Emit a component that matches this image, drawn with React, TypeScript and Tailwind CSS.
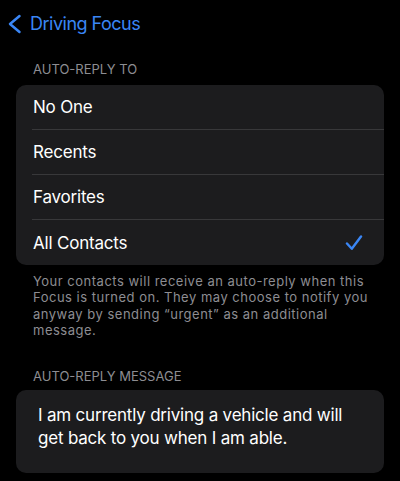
import React from 'react';

const options = ['No One', 'Recents', 'Favorites', 'All Contacts'];

const App = () => {
  const selected = 'All Contacts';

  return (
    <div className="min-h-screen w-[400px] h-[481px] overflow-hidden bg-black text-white font-['Inter',sans-serif]">
      {/* nav bar */}
      <div className="flex items-center h-[44px] pl-[8px] pt-[2px]">
        <svg width="14" height="20" viewBox="0 0 14 20" className="mr-[8px] mt-[1px]">
          <path d="M11.5 2 L2 10 L11.5 18" fill="none" stroke="#3a86f5" strokeWidth="2.5" strokeLinecap="round" strokeLinejoin="round" />
        </svg>
        <span className="text-[18px] text-[#3a86f5] tracking-[-0.5px] pt-[1px]">Driving Focus</span>
      </div>

      <div className="px-[16px]">
        <div className="pl-[17px] pt-[17px] pb-[8px] text-[13px] leading-[16px] text-[#8d8d92]">AUTO-REPLY TO</div>

        <div className="rounded-[10px] bg-[#1c1c1e] overflow-hidden">
          {options.map((o, i) => (
            <div key={o} className="flex h-[45px] pl-[16px]">
              <div
                className={`flex flex-1 items-center pl-[1px] pr-[21px] pt-[2px] ${
                  i < options.length - 1 ? 'border-b border-[#38383a]' : ''
                }`}
              >
                <span className="flex-1 text-[17px] tracking-[-0.2px]">{o}</span>
                {o === selected && (
                  <svg width="18" height="16" viewBox="0 0 18 16" className="-mt-[1px]">
                    <path d="M2 8.5 L6.8 13.8 L16 1.5" fill="none" stroke="#3a86f5" strokeWidth="2.4" strokeLinecap="round" strokeLinejoin="round" />
                  </svg>
                )}
              </div>
            </div>
          ))}
        </div>

        <p className="pl-[17px] pr-[2px] pt-[8px] text-[13px] leading-[16.3px] tracking-[0.5px] text-[#8d8d92]">
          Your contacts will receive an auto-reply when this Focus is turned on. They may choose to notify you anyway by sending “urgent” as an additional message.
        </p>

        <div className="pl-[17px] pt-[30px] pb-[6px] text-[13px] leading-[16px] text-[#8d8d92]">AUTO-REPLY MESSAGE</div>

        <div className="rounded-[10px] bg-[#1c1c1e] h-[83px] pl-[22px] pr-[30px] pt-[14px]">
          <p className="text-[17px] leading-[23px] tracking-[-0.2px]">
            I am currently driving a vehicle and will get back to you when I am able.
          </p>
        </div>
      </div>
    </div>
  );
};

export default App;
